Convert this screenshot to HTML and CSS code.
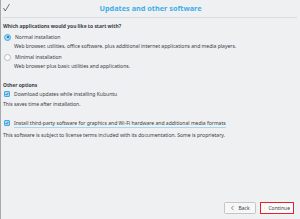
FILE: index.html
```html
<!DOCTYPE html>
<html>
<head>
<meta charset="utf-8">
<link rel="stylesheet" href="styles.css">
</head>
<body>
<div class="page">
  <div class="header">
    <svg class="tick" width="9" height="9" viewBox="0 0 9 9"><polyline points="1.5,5 3.2,8 7.5,1" fill="none" stroke="#555" stroke-width="0.8"/></svg>
    <div class="title">Updates and other software</div>
    <div></div>
  </div>
  <div class="rule"></div>
  <div class="content">
    <div class="heading">Which applications would you like to start with?</div>
    <div class="option first"><span class="radio on"></span><span>Normal installation</span></div>
    <div class="desc indent">Web browser, utilities, office software, plus additional internet applications and media players.</div>
    <div class="option"><span class="radio"></span><span>Minimal installation</span></div>
    <div class="desc indent">Web browser plus basic utilities and applications.</div>
    <div class="heading other">Other options</div>
    <div class="option check"><span class="box"><svg width="6" height="6" viewBox="0 0 6 6"><polyline points="1,3.2 2.4,4.6 5,1.4" fill="none" stroke="#1d3f57" stroke-width="0.9"/></svg></span><span>Download updates while installing Kubuntu</span></div>
    <div class="desc">This saves time after installation.</div>
    <div class="option check second"><span class="box"><svg width="6" height="6" viewBox="0 0 6 6"><polyline points="1,3.2 2.4,4.6 5,1.4" fill="none" stroke="#1d3f57" stroke-width="0.9"/></svg></span><span class="focus">Install third-party software for graphics and Wi-Fi hardware and additional media formats</span></div>
    <div class="desc last">This software is subject to license terms included with its documentation. Some is proprietary.</div>
  </div>
  <div class="footer">
    <button class="btn"><svg width="5" height="6" viewBox="0 0 5 6"><polyline points="3.5,0.8 1.5,3 3.5,5.2" fill="none" stroke="#666" stroke-width="0.7"/></svg>Back</button>
    <button class="btn primary"><svg width="5" height="6" viewBox="0 0 5 6"><polyline points="1.5,0.8 3.5,3 1.5,5.2" fill="none" stroke="#666" stroke-width="0.7"/></svg>Continue</button>
  </div>
</div>
</body>
</html>
```
FILE: styles.css
```css
html, body {
  margin: 0;
  padding: 0;
}
body {
  background: #eff0f1;
  font-family: "Noto Sans", "DejaVu Sans", sans-serif;
  color: #3b4045;
  font-size: 5.05px;
}
.page {
  width: 300px;
  height: 219px;
  box-sizing: border-box;
  border-left: 1px solid #a7a9ab;
  display: flex;
  flex-direction: column;
}
.header {
  display: grid;
  grid-template-columns: 1fr auto 1fr;
  align-items: start;
  height: 17px;
}
.tick {
  margin: 3px 0 0 1px;
}
.title {
  color: #3daee9;
  font-weight: bold;
  font-size: 7.3px;
  line-height: 12px;
  padding-top: 2px;
}
.rule {
  height: 1px;
  background: #d9dbdd;
  margin: 0 3px 0 2px;
}
.content {
  padding: 4px 0 0 2px;
  flex: 1;
}
.heading {
  font-weight: bold;
  font-size: 4.95px;
  line-height: 8px;
  height: 8px;
}
.heading.other {
  margin-top: 11px;
}
.option {
  display: flex;
  align-items: center;
  gap: 4px;
  height: 10px;
  margin-top: 2px;
  padding-left: 1px;
}
.option.check {
  margin-top: 0;
}
.option.second {
  margin-top: 10px;
}
.radio {
  width: 5px;
  height: 5px;
  border-radius: 50%;
  border: 0.6px solid #b8babc;
  background: #fcfcfc;
  box-sizing: content-box;
  position: relative;
  flex: none;
}
.radio.on {
  border-color: #3daee9;
  background: #9fd6f3;
}
.radio.on::after {
  content: "";
  position: absolute;
  left: 1.5px;
  top: 1.5px;
  width: 2px;
  height: 2px;
  border-radius: 50%;
  background: #1d5f86;
}
.box {
  width: 6px;
  height: 6px;
  border-radius: 1px;
  background: #a6d8f3;
  border: 0.5px solid #3daee9;
  box-sizing: border-box;
  display: flex;
  align-items: center;
  justify-content: center;
  flex: none;
}
.box svg {
  display: block;
}
.focus {
  border-bottom: 1px solid #a6d8f3;
  line-height: 8px;
}
.desc {
  line-height: 8px;
  height: 8px;
  margin-top: 1px;
}
.desc.indent {
  padding-left: 11px;
  margin-top: 0;
}
.desc.last {
  margin-top: 3px;
}
.footer {
  display: flex;
  justify-content: flex-end;
  gap: 4px;
  padding: 0 6px 5px 0;
}
.btn {
  font-family: inherit;
  font-size: 5.05px;
  color: #3b4045;
  height: 12px;
  padding: 0 3px;
  display: flex;
  align-items: center;
  gap: 3px;
  background: #f7f7f8;
  border: 0.6px solid #c3c5c7;
  border-radius: 1.5px;
  box-sizing: border-box;
  width: 32px;
  justify-content: center;
}
.btn.primary {
  width: 34px;
  background: #fcfcfc;
  border: 1.5px solid #e8202a;
  border-radius: 0;
}
```
